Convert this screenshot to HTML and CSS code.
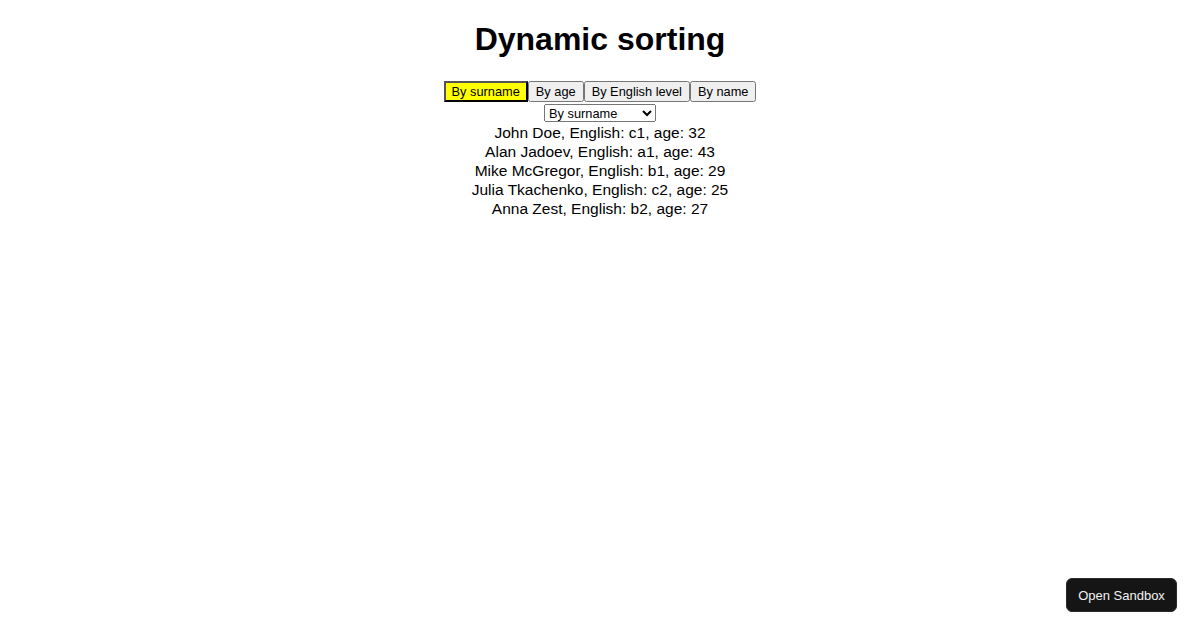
FILE: index.html
```html
<!DOCTYPE html>
<html>
<head>
<meta charset="utf-8">
<title>Dynamic sorting</title>
<link rel="stylesheet" href="styles.css">
</head>
<body>
<div class="app">
<h1 class="title">Dynamic sorting</h1>
<div class="buttons"><button class="sort-btn active">By surname</button><button class="sort-btn">By age</button><button class="sort-btn">By English level</button><button class="sort-btn">By name</button></div>
<div class="select-row"><select class="sort-select"><option>By surname</option><option>By age</option><option>By English level</option><option>By name</option></select></div>
<div class="list">
<div class="item">John Doe, English: c1, age: 32</div>
<div class="item">Alan Jadoev, English: a1, age: 43</div>
<div class="item">Mike McGregor, English: b1, age: 29</div>
<div class="item">Julia Tkachenko, English: c2, age: 25</div>
<div class="item">Anna Zest, English: b2, age: 27</div>
</div>
</div>
<button class="open-sandbox">Open Sandbox</button>
</body>
</html>
```

FILE: styles.css
```css
html, body {
  margin: 0;
  padding: 0;
}
body {
  font-family: "Liberation Sans", Arial, sans-serif;
  background: #fff;
  color: #000;
}
.app {
  text-align: center;
  padding: 21px 8px 0;
}
.title {
  font-size: 32px;
  font-weight: bold;
  margin: 0 0 23px;
}
.buttons {
  display: flex;
  justify-content: center;
}
.sort-btn {
  font-family: "Liberation Sans", Arial, sans-serif;
  font-size: 12.8px;
  height: 21px;
  margin: 0;
}
.sort-btn.active {
  background: yellow;
}
.select-row {
  display: flex;
  justify-content: center;
  margin-top: 2px;
}
.sort-select {
  font-family: "Liberation Sans", Arial, sans-serif;
  font-size: 12.8px;
  height: 18px;
  width: 112px;
  margin: 0;
}
.list {
  margin-top: 0.5px;
}
.item {
  font-size: 15.5px;
  line-height: 19px;
}
.open-sandbox {
  position: fixed;
  right: 23px;
  bottom: 18px;
  width: 111px;
  height: 34px;
  background: #151515;
  color: #f2f2f2;
  border: 1px solid #2a2a2a;
  border-radius: 6px;
  font-family: "Liberation Sans", Arial, sans-serif;
  font-size: 13px;
  padding: 0;
}
```
